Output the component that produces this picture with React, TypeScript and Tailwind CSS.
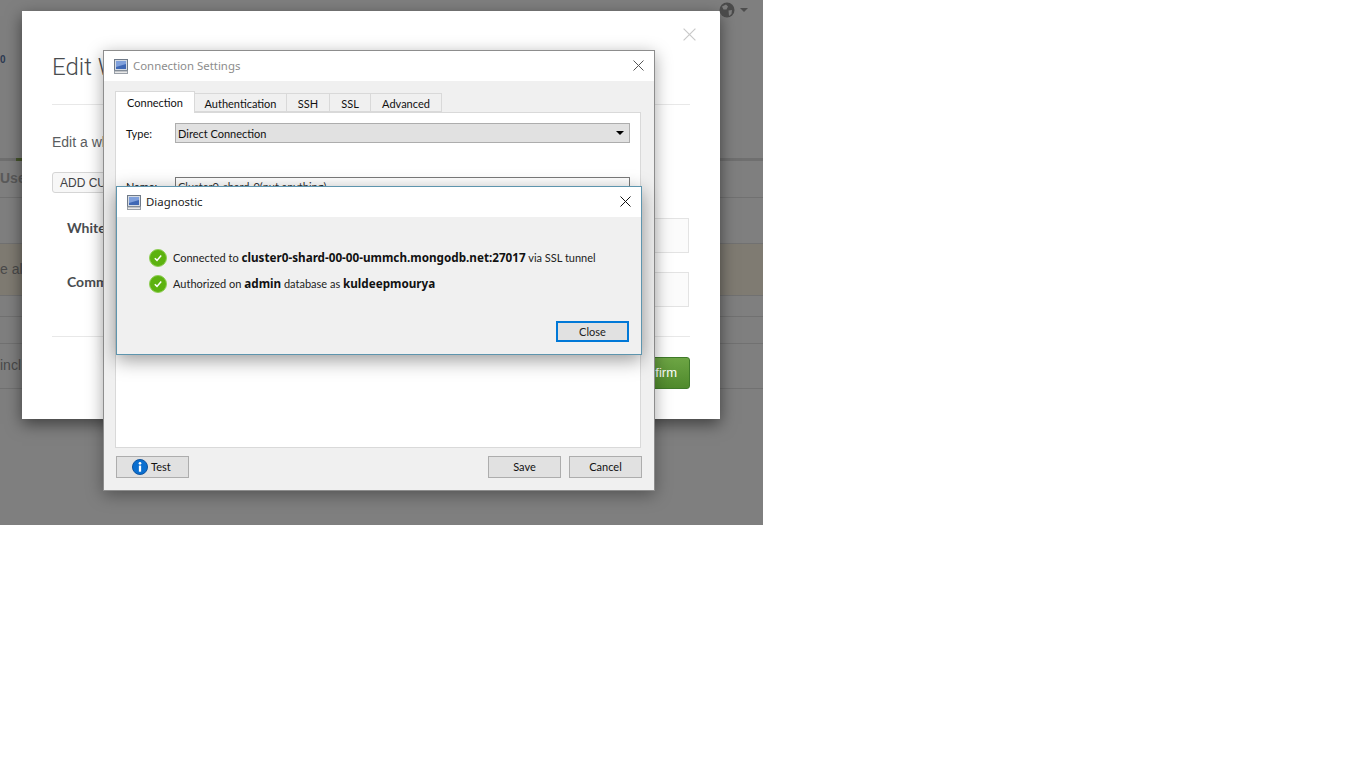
const winFont = { fontFamily: 'Lato, "Noto Sans", sans-serif' }
const notoFont = { fontFamily: '"Noto Sans", sans-serif' }

function PcIcon() {
  return (
    <svg width="14" height="15" viewBox="0 0 14 15" className="shrink-0">
      <rect x="0.5" y="0.5" width="13" height="11" fill="#d5dbe3" stroke="#6f7a88" />
      <rect x="2" y="2" width="10" height="8" fill="#3f68b5" />
      <path d="M2 2h10v3L2 8z" fill="#7fa0dc" />
      <rect x="0.5" y="12" width="13" height="2.5" fill="#e8e8e8" stroke="#9aa0a8" strokeWidth="1" />
    </svg>
  )
}

function CloseX({ color, size = 11 }: { color: string; size?: number }) {
  return (
    <svg width={size} height={size} viewBox="0 0 11 11" className="shrink-0">
      <path d="M0.5 0.5L10.5 10.5M10.5 0.5L0.5 10.5" stroke={color} strokeWidth="1" fill="none" />
    </svg>
  )
}

function OkIcon() {
  return (
    <svg width="18" height="18" viewBox="0 0 18 18" className="shrink-0">
      <circle cx="9" cy="9" r="8.5" fill="#5cb20f" />
      <circle cx="9" cy="9" r="8.5" fill="none" stroke="#8fce55" strokeWidth="1" />
      <path d="M5.8 9.2L8 11.4L12.2 6.4" stroke="#ffffff" strokeWidth="1.5" fill="none" />
    </svg>
  )
}

function InfoIcon() {
  return (
    <svg width="16" height="16" viewBox="0 0 17 17" className="shrink-0">
      <circle cx="8.5" cy="8.5" r="8" fill="#0a6fd0" stroke="#0b4f9a" strokeWidth="1" />
      <circle cx="8.5" cy="4.6" r="1.4" fill="#ffffff" />
      <rect x="7.3" y="7" width="2.4" height="6.5" fill="#ffffff" />
    </svg>
  )
}

function GlobeIcon() {
  return (
    <svg width="16" height="16" viewBox="0 0 16 16" className="shrink-0">
      <circle cx="8" cy="8" r="7.5" fill="#4a4a4a" />
      <path d="M3 4.5L7 2.5L9 4.5L7.5 7.5L4.5 7.5zM9.5 8.5L13 8L12.5 12L10 14z" fill="#7c7c7c" />
    </svg>
  )
}

function WinButton({ label, className }: { label: string; className: string }) {
  return (
    <button className={`h-[22px] w-[73px] border border-[#adadad] bg-[#e1e1e1] text-[11px] text-[#111] ${className}`}>
      {label}
    </button>
  )
}

function BackRow({ h, text, className }: { h: string; text?: string; className?: string }) {
  return (
    <div className={`${h} border-b border-[#717171] text-sm text-[#4a4a4a] flex items-center pb-[2px] ${className ?? ''}`}>
      {text}
    </div>
  )
}

function Tab({ label, w }: { label: string; w: string }) {
  return (
    <div className={`h-[19px] ${w} bg-[#f0f0f0] border border-l-0 border-[#d9d9d9] flex items-center justify-center pt-[3px]`}>
      {label}
    </div>
  )
}

export default function App() {
  return (
    <div className="min-h-screen bg-white">
      <div className="relative w-[763px] h-[525px] overflow-hidden bg-[#7f7f7f]" style={{ fontFamily: '"Liberation Sans", Arial, sans-serif' }}>
        {/* dimmed page behind the modal */}
        <div className="pt-[52px] text-[10px] font-bold text-[#2c3a52] h-[158px]">0</div>
        <div className="h-[3px] bg-[#6f6f6f] flex">
          <div className="ml-[16px] w-[20px] bg-[#46562c]" />
        </div>
        <BackRow h="h-[37px]" text="Use" className="font-bold text-[#5a5a5a]" />
        <BackRow h="h-[46px]" />
        <BackRow h="h-[52px]" text="e al" className="bg-[#7f7b72]" />
        <BackRow h="h-[21px]" />
        <BackRow h="h-[27px]" />
        <BackRow h="h-[45px]" text="incl" />

        {/* web modal */}
        <div className="absolute left-[22px] top-[11px] w-[698px] h-[408px] bg-white px-[30px] shadow-[0_5px_15px_rgba(0,0,0,0.5)]">
          <div className="absolute right-[24px] top-[17px]">
            <CloseX color="#c9c9c9" size={13} />
          </div>
          <div className="h-[94px] border-b border-[#e8e8e8] pt-[41px] text-2xl leading-[30px] font-light text-[#494c4f]" style={{ fontFamily: 'Roboto, sans-serif' }}>
            Edit Whitelist Entry
          </div>
          <p className="mt-[27px] text-sm leading-5 text-[#5a5d60]">Edit a whitelist entry</p>
          <button className="mt-[20px] block h-[21px] pl-[7px] pr-2 rounded-[3px] border border-[#d5d5d5] bg-[#f7f7f7] text-xs text-[#3f4245]">
            ADD CURRENT IP ADDRESS
          </button>
          <div className="mt-[25px] h-[35px] flex pl-[15px] pr-[1px] justify-between">
            <span className="text-sm font-bold text-[#494c4f]" style={{ fontFamily: 'Lato, sans-serif' }}>Whitelist Entry:</span>
            <div className="w-[300px] border border-[#e3e3e3] bg-[#fbfbfb]" />
          </div>
          <div className="mt-[19px] h-[35px] flex pl-[15px] pr-[1px] justify-between">
            <span className="text-sm font-bold text-[#494c4f]" style={{ fontFamily: 'Lato, sans-serif' }}>Comment:</span>
            <div className="w-[300px] border border-[#e3e3e3] bg-[#fbfbfb]" />
          </div>
          <div className="mt-[29px] border-t border-[#e8e8e8] pt-[20px] flex justify-end">
            <button className="h-[32px] w-[80px] rounded-[3px] border border-[#3f7a29] bg-gradient-to-b from-[#6da544] to-[#4f8a2c] text-right pr-[12px] text-[13px] text-white">
              Confirm
            </button>
          </div>
        </div>

        <div className="absolute top-[2px] left-[719px] flex items-center gap-[5px]">
          <GlobeIcon />
          <div className="w-0 h-0 border-x-[4px] border-x-transparent border-t-[4px] border-t-[#4d4d4d]" />
        </div>

        {/* connection settings window */}
        <div className="absolute left-[103px] top-[50px] w-[552px] h-[441px] border border-[#8d8d8d] bg-[#f0f0f0] shadow-[0_4px_16px_rgba(0,0,0,0.35)] flex flex-col" style={winFont}>
          <div className="h-[30px] bg-white flex items-center pl-[10px] pr-[10px] gap-[5px] text-[11.4px] text-[#8c8c8c]" style={notoFont}>
            <PcIcon />
            <span className="flex-1">Connection Settings</span>
            <div className="-mt-[2px]">
              <CloseX color="#555555" />
            </div>
          </div>
          <div className="flex items-end h-[31px] pl-[11px] text-[11px] text-[#111]">
            <div className="relative z-10 h-[22px] w-[80px] -mb-px bg-white border border-b-0 border-[#d9d9d9] flex items-center justify-center pt-px">Connection</div>
            <Tab label="Authentication" w="w-[92px]" />
            <Tab label="SSH" w="w-[43px]" />
            <Tab label="SSL" w="w-[41px]" />
            <Tab label="Advanced" w="w-[71px]" />
          </div>
          <div className="ml-[11px] mr-[13px] h-[336px] border border-[#d9d9d9] bg-white text-[11px] text-[#111] pt-[10px] px-[10px]">
            <div className="flex items-center h-[20px]">
              <span className="w-[49px] pt-[2px]">Type:</span>
              <div className="flex-1 h-[20px] border border-[#adadad] bg-[#e1e1e1] flex items-center pl-[2px] pr-[5px] pt-[2px] justify-between">
                <span>Direct Connection</span>
                <div className="w-0 h-0 -mt-[2px] border-x-[4px] border-x-transparent border-t-[4px] border-t-black" />
              </div>
            </div>
            <div className="flex items-center h-[20px] mt-[34px]">
              <span className="w-[49px]">Name:</span>
              <div className="flex-1 h-[20px] border border-[#7a7a7a] bg-white flex items-center pl-[2px] text-[#333]">
                Cluster0-shard-0(put anything)
              </div>
            </div>
          </div>
          <div className="flex items-center h-[22px] mt-[8px] px-[12px]">
            <button className="h-[22px] w-[73px] border border-[#adadad] bg-[#e1e1e1] text-[11px] text-[#111] flex items-center pl-[15px] gap-[3px]">
              <InfoIcon />
              <span className="pt-px">Test</span>
            </button>
            <WinButton label="Save" className="ml-auto" />
            <WinButton label="Cancel" className="ml-[8px]" />
          </div>
        </div>

        {/* diagnostic dialog */}
        <div className="absolute left-[116px] top-[186px] w-[526px] h-[169px] border border-[#5e95ae] bg-[#f0f0f0] shadow-[0_5px_18px_rgba(0,0,0,0.4)] flex flex-col" style={winFont}>
          <div className="h-[30px] bg-white flex items-center pl-[10px] pr-[10px] gap-[5px] text-[11.4px] text-[#222]" style={notoFont}>
            <PcIcon />
            <span className="flex-1">Diagnostic</span>
            <div className="-mt-[2px]">
              <CloseX color="#111111" />
            </div>
          </div>
          <div className="mt-[31px] ml-[32px] flex items-center gap-[6px] h-[20px] text-[11px] text-[#222]">
            <OkIcon />
            <span>
              Connected to <b className="text-[11.7px] text-[#111]" style={notoFont}>cluster0-shard-00-00-ummch.mongodb.net:27017</b> via SSL tunnel
            </span>
          </div>
          <div className="mt-[6px] ml-[32px] flex items-center gap-[6px] h-[20px] text-[11px] text-[#222]">
            <OkIcon />
            <span>
              Authorized on <b className="text-[11.7px] text-[#111]" style={notoFont}>admin</b> database as <b className="text-[11.7px] text-[#111]" style={notoFont}>kuldeepmourya</b>
            </span>
          </div>
          <div className="mt-auto mb-[12px] mr-[12px] flex justify-end">
            <button className="h-[21px] w-[73px] border-2 border-[#0078d7] bg-[#e1e1e1] text-[11px] text-[#222] pt-px">Close</button>
          </div>
        </div>
      </div>
    </div>
  )
}
